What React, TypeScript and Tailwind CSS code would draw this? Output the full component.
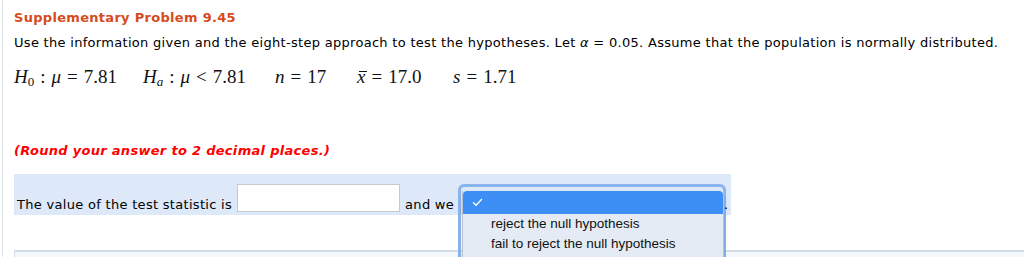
import React from 'react';

const verdana = { fontFamily: '"DejaVu Sans", Verdana, sans-serif' };

const Op = ({ children }: { children: React.ReactNode }) => <span className="mx-[6px]">{children}</span>;

export default function App() {
  return (
    <div className="w-[1024px] h-[257px] overflow-hidden bg-white">
      <div className="ml-[2px] h-full border-l border-[#dfe4ea] pl-[11px]" style={verdana}>
        {/* heading */}
        <div className="pt-[10px] text-[13px] leading-[16px] font-bold tracking-[0.3px] text-[#d64b1c]">Supplementary Problem 9.45</div>
        <div className="mt-[9px] text-[13px] leading-[16px] tracking-[0.3px] text-black">
          Use the information given and the eight-step approach to test the hypotheses. Let <i>α</i> = 0.05. Assume that the population is normally distributed.
        </div>

        {/* givens */}
        <div className="mt-[15px] flex whitespace-nowrap text-[19px] leading-[22px] text-[#111]" style={{ fontFamily: '"Liberation Serif", "Times New Roman", serif' }}>
          <span className="w-[129px]">
            <i>H</i><sub className="text-[13px]">0</sub><Op>:</Op><i>μ</i><Op>=</Op>7.81
          </span>
          <span className="w-[132px]">
            <i>H</i><sub className="text-[13px]"><i>a</i></sub><Op>:</Op><i>μ</i><Op>&lt;</Op>7.81
          </span>
          <span className="w-[82px]">
            <i>n</i><Op>=</Op>17
          </span>
          <span className="w-[96px]">
            <i className="relative">
              x
              <span className="absolute left-[2px] top-[5px] h-[1px] w-[8px] bg-[#111]" />
            </i>
            <Op>=</Op>17.0
          </span>
          <span>
            <i>s</i><Op>=</Op>1.71
          </span>
        </div>

        <div className="mt-[55px] text-[13px] leading-[16px] font-bold italic tracking-[0.3px] text-[#ff0000]">(Round your answer to 2 decimal places.)</div>

        {/* answer band */}
        <div className="relative mt-[15px] flex h-[41px] w-[717px] items-end whitespace-nowrap bg-[#dde8f8] pb-[1px] pl-[3px] text-[13px] leading-[16px] tracking-[0.3px] text-black">
          <span className="mb-[1px] shrink-0">The value of the test statistic is</span>
          <span className="ml-[5px] mb-[2px] h-[28px] w-[163px] shrink-0 border border-[#c9c9c9] bg-white" />
          <span className="ml-[5px] mb-[1px] shrink-0">and we</span>
          <span className="ml-[4px] h-[30px] w-[266px] shrink-0" />
          <span className="relative z-30 mb-[1px] shrink-0">.</span>

          {/* open select menu */}
          <div className="absolute left-[444px] top-[10px] z-10 h-[90px] w-[268px] rounded-[6px] border-[3px] border-b-0 border-[#8ab4ee]" />
          <div
            className="absolute left-[448px] top-[17px] z-20 w-[262px] border-x border-b border-[#b9c2cc] bg-[#e4ebf5] text-[13.5px] tracking-normal text-[#111] shadow-md"
            style={{ fontFamily: '"Liberation Sans", Helvetica, Arial, sans-serif' }}
          >
            <div className="flex h-[23px] items-center rounded-t-[4px] bg-[#3d8ff6] pl-[9px]">
              <svg width="11" height="9" viewBox="0 0 11 9" fill="none">
                <path d="M1.5 4.8 L4 7.2 L9.5 1.5" stroke="white" strokeWidth="1.4" strokeLinecap="round" strokeLinejoin="round" />
              </svg>
            </div>
            <div className="flex h-[20px] items-center pl-[28px]">reject the null hypothesis</div>
            <div className="flex h-[20px] items-center pl-[28px]">fail to reject the null hypothesis</div>
            <div className="h-[10px]" />
          </div>
        </div>

        {/* next part box */}
        <div className="mt-[35px] h-[40px] w-full border-t-2 border-l border-[#d3dde7] bg-[#f4f8fc]" />
      </div>
    </div>
  );
}
